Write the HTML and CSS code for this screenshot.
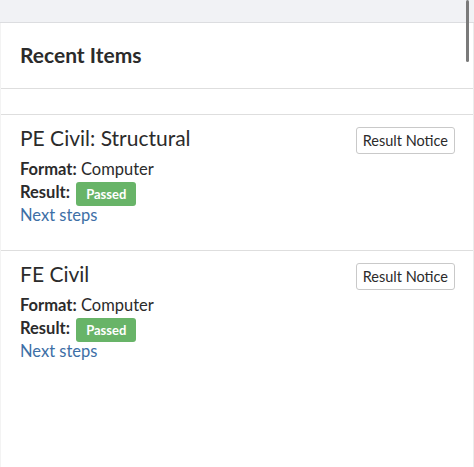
FILE: index.html
```html
<!DOCTYPE html>
<html>
<head>
<meta charset="utf-8">
<link rel="stylesheet" href="styles.css">
</head>
<body>
<div class="topbar"></div>
<div class="panel">
  <div class="header"><h2 class="title">Recent Items</h2></div>
  <div class="spacer"></div>
  <div class="card">
    <div class="info">
      <div class="name">PE Civil: Structural</div>
      <div class="row"><b>Format:</b> Computer</div>
      <div class="row"><b>Result:</b> <span class="badge">Passed</span></div>
      <a class="link" href="#">Next steps</a>
    </div>
    <button class="btn">Result Notice</button>
  </div>
  <div class="card">
    <div class="info">
      <div class="name">FE Civil</div>
      <div class="row"><b>Format:</b> Computer</div>
      <div class="row"><b>Result:</b> <span class="badge">Passed</span></div>
      <a class="link" href="#">Next steps</a>
    </div>
    <button class="btn">Result Notice</button>
  </div>
</div>
<div class="scrollbar"></div>
</body>
</html>
```
FILE: styles.css
```css
html, body {
  margin: 0;
  padding: 0;
  background: #ffffff;
  font-family: "Lato", "Liberation Sans", sans-serif;
  color: #2b2b2b;
}
.topbar {
  height: 22px;
  background: #f1f2f5;
  border-bottom: 1px solid #dcdde0;
}
.panel {
  border-right: 1px solid #ececec;
  border-left: 1px solid #f3f3f3;
  min-height: 444px;
}
.header {
  height: 65px;
  padding: 0 19px;
  display: flex;
  align-items: center;
  border-bottom: 1px solid #dedede;
}
.title {
  margin: 0 0 3px;
  font-size: 21px;
  font-weight: 700;
  color: #2b2b2b;
}
.spacer {
  height: 25px;
  border-bottom: 1px solid #dedede;
}
.card {
  display: flex;
  justify-content: space-between;
  align-items: flex-start;
  padding: 10px 18px 0 19px;
  height: 125px;
  border-bottom: 1px solid #dedede;
}
.card:last-child {
  border-bottom: none;
}
.info {
  display: flex;
  flex-direction: column;
}
.name {
  font-size: 21px;
  line-height: 26px;
  color: #2b2b2b;
  margin-bottom: 7px;
}
.row {
  font-size: 16.5px;
  line-height: 23px;
  height: 23px;
  color: #2b2b2b;
}
.row b {
  font-weight: 700;
}
.badge {
  display: inline-block;
  background: #68b468;
  color: #ffffff;
  font-weight: 700;
  font-size: 13px;
  line-height: 24px;
  height: 24px;
  padding: 0 10px;
  margin-left: 2px;
  border-radius: 3px;
  vertical-align: middle;
}
.link {
  font-size: 16.5px;
  line-height: 22px;
  color: #3d6fa6;
  text-decoration: none;
}
.btn {
  margin-top: 2px;
  height: 27px;
  padding: 0 6px;
  border: 1px solid #c9c9c9;
  border-radius: 3px;
  background: #ffffff;
  font-family: "Lato", "Liberation Sans", sans-serif;
  font-size: 14.5px;
  color: #2b2b2b;
}
.scrollbar {
  position: absolute;
  top: 0;
  left: 466px;
  width: 3px;
  height: 62px;
  border-radius: 2px;
  background: #7a7a7a;
}
```
